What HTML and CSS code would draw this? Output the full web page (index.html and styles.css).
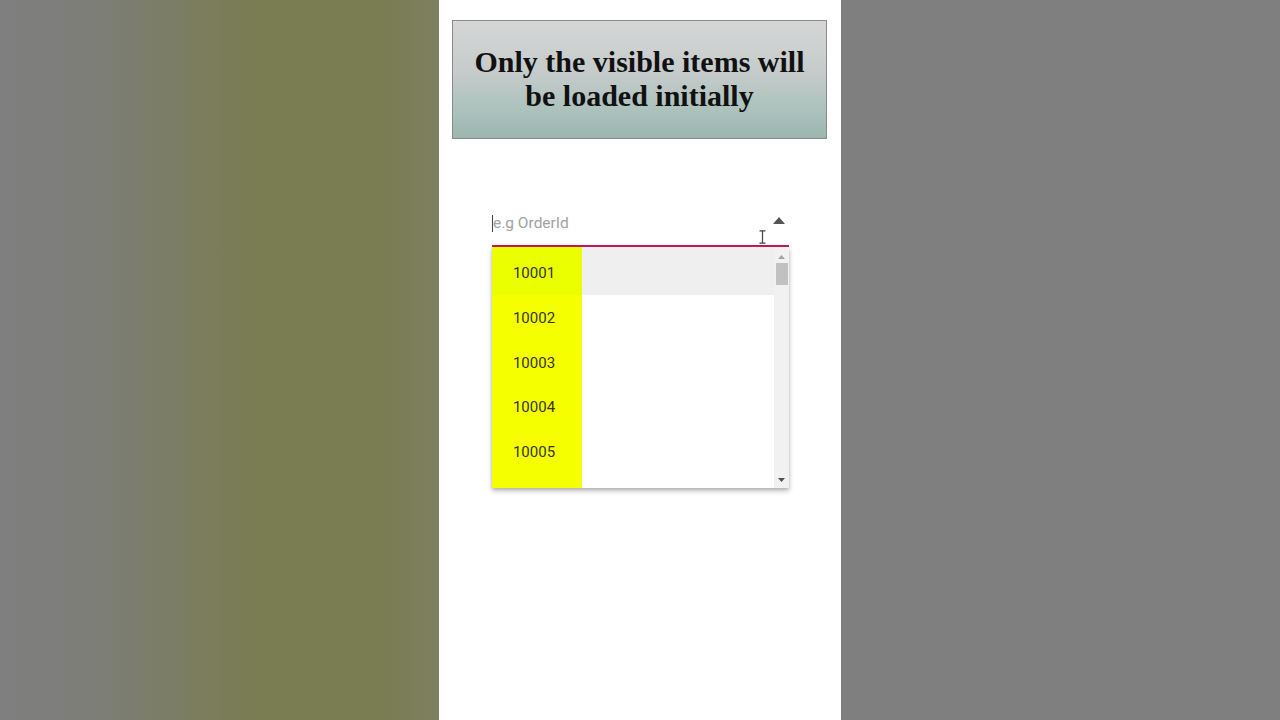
FILE: index.html
```html
<!DOCTYPE html>
<html>
<head>
<meta charset="utf-8">
<link rel="stylesheet" href="styles.css">
</head>
<body>
<div class="stage">
  <div class="side left"></div>
  <div class="phone">
    <div class="banner">
      <div class="banner-text">Only the visible items will<br>be loaded initially</div>
    </div>
    <div class="combo">
      <div class="field">
        <span class="caret"></span>
        <span class="placeholder">e.g OrderId</span>
        <span class="spacer"></span>
        <svg class="arrow" width="12" height="7" viewBox="0 0 12 7"><path d="M0 7 L6 0 L12 7 Z" fill="#555"/></svg>
        <svg class="ibeam" width="7" height="14" viewBox="0 0 7 14"><path d="M0.5 0.8 H6.5 M3.5 0.8 V13.2 M0.5 13.2 H6.5" stroke="#444" stroke-width="1.2" fill="none"/></svg>
      </div>
      <div class="popup">
        <div class="list">
          <div class="item active"><span class="cell">10001</span></div>
          <div class="item"><span class="cell">10002</span></div>
          <div class="item"><span class="cell">10003</span></div>
          <div class="item"><span class="cell">10004</span></div>
          <div class="item"><span class="cell">10005</span></div>
          <div class="item tail"><span class="cell"></span></div>
        </div>
        <div class="scrollbar">
          <svg class="sb-arrow" width="7" height="4" viewBox="0 0 7 4"><path d="M0 4 L3.5 0 L7 4 Z" fill="#a3a3a3"/></svg>
          <div class="thumb"></div>
          <div class="sb-fill"></div>
          <svg class="sb-arrow" width="7" height="4" viewBox="0 0 7 4"><path d="M0 0 L3.5 4 L7 0 Z" fill="#505050"/></svg>
        </div>
      </div>
    </div>
  </div>
  <div class="side right"></div>
</div>
</body>
</html>
```
FILE: styles.css
```css
html, body {
  margin: 0;
  padding: 0;
  width: 1280px;
  height: 720px;
  overflow: hidden;
}
.stage {
  display: flex;
  width: 1280px;
  height: 720px;
}
.side {
  height: 720px;
}
.left {
  width: 439px;
  background: linear-gradient(to right, #7f7f7f 0px, #7e7e7c 60px, #7c7d70 130px, #7b7d5e 200px, #7a7c52 260px, #7a7c52 380px, #7d7f62 439px);
}
.right {
  width: 439px;
  background: #7f7f7f;
}
.phone {
  width: 402px;
  height: 720px;
  background: #ffffff;
  display: flex;
  flex-direction: column;
  padding-top: 20px;
  box-sizing: border-box;
}
.banner {
  margin-left: 13px;
  width: 375px;
  height: 119px;
  box-sizing: border-box;
  border: 1px solid #8a8a8a;
  background: linear-gradient(to bottom, #d6d6d6 0%, #c4cbca 45%, #adc2bd 75%, #9cb6b0 100%);
  display: flex;
  align-items: center;
  justify-content: center;
}
.banner-text {
  font-family: "Liberation Serif", "DejaVu Serif", serif;
  font-weight: bold;
  font-size: 30px;
  line-height: 34px;
  color: #111;
  text-align: center;
  margin-top: -1px;
}
.combo {
  margin-left: 53px;
  width: 297px;
  margin-top: 69px;
  font-family: Roboto, "Noto Sans", sans-serif;
}
.field {
  height: 37px;
  border-bottom: 2px solid #c2185b;
  display: flex;
  align-items: flex-start;
  position: relative;
}
.caret {
  width: 1px;
  height: 17px;
  background: #444;
  margin-top: 7px;
}
.placeholder {
  font-size: 15.5px;
  color: #a2a2a2;
  margin-top: 7px;
  line-height: 17px;
}
.spacer { flex: 1; }
.arrow {
  margin-top: 9px;
  margin-right: 4px;
}
.ibeam {
  position: absolute;
  left: 267px;
  top: 22px;
}
.popup {
  height: 241px;
  display: flex;
  background: #fff;
  box-shadow: 0 3px 5px rgba(0,0,0,0.25), 0 1px 3px rgba(0,0,0,0.12);
  overflow: hidden;
}
.list {
  flex: 1;
  display: flex;
  flex-direction: column;
  padding-top: 3px;
  background: linear-gradient(to right, #f6ff00 0px, #f6ff00 90px, #ffffff 90px);
  margin-top: -3px;
}
.item {
  height: 44.5px;
  flex: none;
  display: flex;
  align-items: center;
  padding-top: 2px;
  box-sizing: border-box;
}
.item.active {
  background: linear-gradient(to right, #eaff00 0px, #eaff00 90px, #efefef 90px);
  height: 48px;
  padding-top: 4px;
}
.item.tail { flex: 1; }
.cell {
  width: 84px;
  text-align: center;
  font-size: 15px;
  color: #35351f;
}
.scrollbar {
  width: 15px;
  background: #f1f1f1;
  display: flex;
  flex-direction: column;
  align-items: center;
  padding: 8px 0 6px;
  box-sizing: border-box;
}
.sb-arrow { flex: none; }
.thumb {
  width: 12px;
  height: 22px;
  background: #c1c1c1;
  margin-top: 4px;
}
.sb-fill { flex: 1; }
```
